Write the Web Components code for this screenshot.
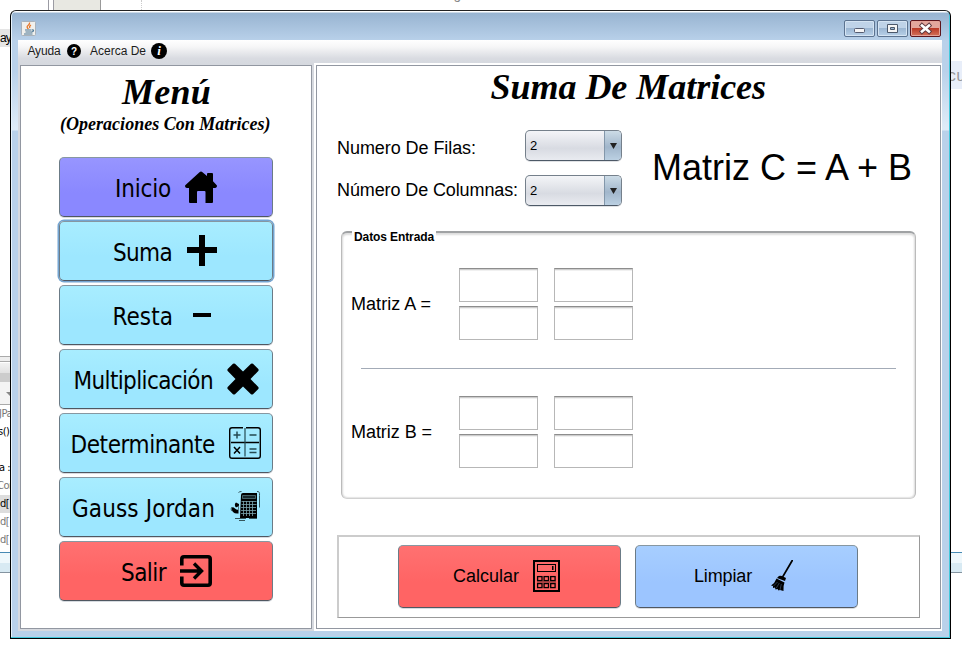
<!DOCTYPE html>
<html lang="es"><head><meta charset="utf-8"><title>Suma De Matrices</title>
<style>html,body{margin:0;width:962px;height:649px;overflow:hidden;background:#fff;font-family:"Liberation Sans",Arial,sans-serif;color:#000}</style></head>
<body><desk-top></desk-top>
<script>
const define=(name,html,setup)=>customElements.define(name,class extends HTMLElement{
  connectedCallback(){
    if(this.shadowRoot)return;
    this.attachShadow({mode:"open"}).innerHTML=typeof html==="function"?html(this):html;
    if(setup)setup(this);
  }
});
const svg=(body,w=32,h=32,vb=`0 0 ${w} ${h}`)=>`<svg width="${w}" height="${h}" viewBox="${vb}">${body}</svg>`;
const keys=(xs,ys,w,h)=>ys.map(y=>xs.map(x=>`<rect x="${x}" y="${y}" width="${w}" height="${h}"/>`).join("")).join("");
const ICONS={
 home:svg('<path d="M14.5 1.2Q16 0 17.5 1.2L22 5V3Q22 2 23 2H27Q28 2 28 3V10.3L31.5 14Q32.5 15 31.5 16.2Q31 17 30 17H28V31Q28 32 27 32H20.5V21Q20.5 20 19.5 20H13Q12 20 12 21V32H5Q4 32 4 31V17H2Q1 17 .4 16.2Q-.4 15 .5 14Z"/>'),
 plus:svg('<path d="M13 0h6v12h12v6H19v13h-6V18H1v-6h12z"/>'),
 minus:svg('<path d="M7 14h18v4H7z"/>'),
 times:svg('<path d="M6 .8Q7 0 8 .8L16 8.500 24 .8Q25 0 26 .8L31.300 6Q32 7 31.300 8L23.500 16l7.800 8Q32 25 31.300 26L26 31.200Q25 32 24 31.200L16 23.500 8 31.200Q7 32 6 31.200L.7 26Q0 25 .7 24L8.500 16 .7 8Q0 7 .7 6Z"/>'),
 grid:svg('<g fill="none" stroke="#000"><path d="M14 .7H3Q.7.7.7 3v26q0 2.300 2.300 2.300h26q2.300 0 2.300-2.300V3Q31.300.7 29 .7H17M2 15.500h28" stroke-width="1.400"/><path d="M16 1v28.500" stroke="#244a52" stroke-width="1.200"/><path d="M4.500 8h7M8 4.500v7M20.500 8h7M20.500 22h7M20.500 25.500h7" stroke="#244a52" stroke-width="1.500"/><path d="M5 20l6 6.500m0-6.500-6 6.500" stroke-width="1.500"/></g>'),
 gauss:svg('<path d="M11 4q0-2 2-2h14v25H10Z"/><path d="M8.500 1.500q1-1 3-1M27 .5q3-.5 2.500 4v12" fill="none" stroke="#36565c"/><path d="M12.500 4.500h13v3h-13z" fill="#17262a" stroke="#6b939b" stroke-width=".6"/><path d="M11.500 10.500h15M11.500 13.500h15M11 16.500h15M11 19.500h15M11 22.500h15M13.500 10v15M16.500 10v15M19.500 10v15M22.500 10v15" stroke="#7aa5af" stroke-width=".8"/><path d="M6 11.500Q4 13 5.500 16q2 1 3-1.500V22.500Q5 23 3 21 1 19 2 16.500q1-1 3 1 2 2 4 1V13z"/><path d="M2 16q-2 2 0 4M5 27.500h11m3 0h8M9 29.500h6" fill="none" stroke="#36565c"/>'),
 exit:svg('<path d="M1.800 10.500V4Q1.800 1.800 4 1.800h24q2.200 0 2.200 2.200v24q0 2.200-2.200 2.200H4q-2.200 0-2.200-2.200v-6.500" fill="none" stroke="#000" stroke-width="3.600"/><path d="M0 16h21M14 8.500l7.500 7.500-7.500 7.500" fill="none" stroke="#000" stroke-width="3.400"/>'),
 calc:svg('<path fill-rule="evenodd" d="M0 0h27v32H0zM2 2v28h23V2z"/><path fill-rule="evenodd" d="M4 4h19v8H4zM5 5v6h17V5z"/><path d="M19 6h1.500v4H19z"/><g fill="none" stroke="#000" stroke-width="1.300">'+keys([4.6,11.1,17.700],[16.600,23.600],4.400,4)+'</g><path d="M4 22h19" stroke="#6b2929"/>',27,32),
 broom:svg('<path d="M20.500 0h1.500v1L12 18h-2zM7 17q1-2 4-1l4 2-1 3-8-3zM5.500 18.500l8 4Q12 26 12.500 31L9 30 7.500 30.500 6.500 29 4.500 29.500 4 27.500 2 28 2 26 0 25.500Q4 23 5.500 18.500Z"/><path d="M6.500 22l-4 4M8.300 23l-3 5M10.300 24l-1.300 6" stroke="#5b7594" stroke-width=".5"/>',23,32)
};

define("desk-top",`<style>:host{display:block;position:relative;width:962px;height:649px;overflow:hidden;background:#fff}
i,span{position:absolute;display:block;font-style:normal;white-space:pre;box-sizing:border-box}
span{font-size:12px;line-height:16px;letter-spacing:-.3px}.c{font:11px/16px "DejaVu Sans Condensed",sans-serif;letter-spacing:-.5px}app-window{position:absolute;left:10px;top:10px}</style>
<i style="left:48px;top:0;width:6px;height:11px;border:solid #9b9ba3;border-width:0 1px"></i><i style="left:54px;top:0;width:47px;height:11px;background:#e8e8e2;border-right:1px solid #999"></i>
<i style="left:141px;top:0;height:10px;border-left:1px dotted #ccc"></i><span style="left:453px;top:-13px;color:#888;font-family:'Liberation Mono',monospace;font-size:14px">g</span>
<i style="left:0;top:29px;width:11px;height:18px;background:#e5e5e5"></i><span style="left:0;top:30px;letter-spacing:-.8px">ay</span>
<i style="left:0;top:356px;width:11px;height:6px;border:solid #aaa;border-width:1px 0;background:#eee"></i><i style="left:0;top:363px;width:11px;height:19px;background:linear-gradient(#f2f2f2,#e2e2e2 50%,#ccc 51%)"></i><i style="left:0;top:382px;width:11px;height:23px;background:#f4f4f4;border-bottom:1px solid #aaa"></i><i style="left:6px;top:392px;border:4px solid transparent;border-top-color:#888;border-bottom:0"></i>
<span class="c" style="left:-1px;top:406px;color:#777">JPa</span><span class="c" style="left:-2px;top:424px">s()</span><span class="c" style="left:-1px;top:460px">a :</span><span class="c" style="left:-3px;top:478px;color:#777">Con</span>
<i style="left:0;top:495px;width:11px;height:18px;background:#ddd"></i><span class="c" style="left:0;top:496px">d[</span><span class="c" style="left:0;top:514px;color:#777">d[</span><span class="c" style="left:0;top:532px;color:#777">d[</span>
<i style="left:0;top:552px;width:11px;height:21px;border:solid #478ab4;border-width:1px 0;border-bottom-color:#8494a0;background:linear-gradient(#eff8fc 50%,#d8eaf3 51%)"></i>
<i style="left:950px;top:552px;width:12px;height:21px;border:solid #478ab4;border-width:1px 0;border-bottom-color:#8494a0;background:linear-gradient(#eff8fc 50%,#d8eaf3 51%)"></i>
<i style="left:950px;top:61px;width:12px;height:28px;background:#e8eef9"></i><span style="left:947px;top:69px;color:#999;font-family:'Liberation Mono',monospace;font-size:16px;letter-spacing:-.5px">cu</span>
<app-window></app-window>`);

define("app-window",`<style>
:host{display:flex;flex-direction:column;box-sizing:border-box;width:941px;height:629px;border:1px solid #000;border-top-color:#222;border-radius:6px 6px 0 0;overflow:hidden;background:linear-gradient(#fff 1px,#98b4d1 2px,#b9d1ea 30px,#b9d1ea 60px,#deebf7 116px,#deebf7 119px,#b9d1ea 120px);box-shadow:inset -1px -1px #43c8db,inset 1px 0 #e7f3fc}
.client{margin:0 8px 0 7px;height:591px;background:linear-gradient(90deg,#d6d9df 296px,#fff 296px);display:flex;flex-direction:column}
.cols{display:flex;gap:4px;padding:2px 1px 2px 2px}
</style><title-bar></title-bar><div class="client"><menu-bar></menu-bar><div class="cols"><side-panel></side-panel><main-panel></main-panel></div></div>`);

define("title-bar",`<style>:host{display:flex;height:29px;padding:0 9px 0 9px;align-items:flex-start;gap:2px}
.j{margin:10px auto 0 1px;width:15px;height:15px}
b{box-sizing:border-box;width:31px;height:17px;margin-top:9px;border:1px solid #5c7390;border-radius:2px;background:linear-gradient(#bfd3e8 48%,#9cb7d3 50%,#b8d0e8);box-shadow:inset 0 0 0 1px #d5e4f3}
b.x{border-color:#5d151c;background:linear-gradient(#e3a79d 48%,#bb3b28 50%,#d4735b);box-shadow:inset 0 0 0 1px #e4a399}svg{display:block}</style>
<svg class="j" viewBox="0 0 15 15"><rect x=".5" y=".5" width="14" height="14" rx="1" fill="#f1f0ed" stroke="#aab2ba"/><path d="M8.500 1.500Q9 3 7 4.500T7.500 8M10 4Q8 5 8.800 7" fill="none" stroke="#e8792b" stroke-width="1.300"/><path d="M4 9h6.500M4.500 11h5.500M3 13h8.500M11 9q2.500-.5 1 1.500l-2 .8" fill="none" stroke="#4d7795" stroke-width="1.200"/></svg>
<b><svg width="29" height="15"><rect x="9.500" y="7.500" width="10" height="4" rx="1" fill="#f5f5f5" stroke="#555b70"/></svg></b>
<b><svg width="29" height="15"><path fill-rule="evenodd" d="M9.500 3.500h10v8h-10zM12.500 6.500v2h4v-2z" fill="#f5f5f5" stroke="#4b586b"/></svg></b>
<b class="x"><svg width="29" height="15"><path d="M11 4.500l7 6m0-6l-7 6" stroke="#633b40" stroke-width="4.500" stroke-linecap="square"/><path d="M11 4.500l7 6m0-6l-7 6" stroke="#fff" stroke-width="2.600" stroke-linecap="square"/></svg></b>`);

define("menu-bar",`<style>:host{display:flex;align-items:center;height:23px;box-sizing:border-box;padding:0 0 1px 9.500px;background:linear-gradient(#fff,#f6f6f7 30%,#d9dbe1 80%,#d6d9df);font-size:12px;color:#1c1c1c}
svg{display:block}.q{margin:0 9.500px 0 6px}.n{margin-left:5px}text{font:bold 10px "Liberation Sans";fill:#fff;text-anchor:middle}.n text{font:italic bold 13px "Liberation Serif"}</style>
<fit-text w="33">Ayuda</fit-text><svg class="q" width="14" height="14"><circle cx="7" cy="7" r="7"/><text x="7" y="10.700">?</text></svg>
<fit-text w="56">Acerca De</fit-text><svg class="n" width="16" height="16"><circle cx="8" cy="8" r="8"/><text x="8" y="12.300">i</text></svg>`);

define("side-panel",`<style>:host{display:flex;flex-direction:column;align-items:flex-start;box-sizing:border-box;width:292px;height:564px;border:1px solid #9297a1;background:#fff;padding:6px 0 0 38px}
.t{font:italic bold 36px/41px "Liberation Serif",serif;margin-left:63px}.s{font:italic bold 18px/20px "Liberation Serif",serif;margin:1px 0 0 1px}
.l{display:flex;flex-direction:column;gap:4px;margin-top:23px}</style>
<fit-text class="t" w="89">Menú</fit-text><fit-text class="s" w="210.500">(Operaciones Con Matrices)</fit-text>
<div class="l"><op-button icon="home" tx="55" w="56" g="14" tone="violet">Inicio</op-button><op-button icon="plus" tx="53" w="59" g="14" focused>Suma</op-button><op-button icon="minus" tx="52.500" w="60.500" g="13">Resta</op-button><op-button icon="times" tx="13.500" w="139.500" g="14">Multiplicación</op-button><op-button icon="grid" tx="10.500" w="144.500" g="14">Determinante</op-button><op-button icon="gauss" tx="12" w="143" g="15">Gauss Jordan</op-button><op-button icon="exit" tx="61" w="45" g="14" tone="red">Salir</op-button></div>`);

define("op-button",h=>`<style>
:host{display:flex;align-items:center;box-sizing:border-box;width:214px;height:60px;padding:0 0 0 ${h.getAttribute("tx")}px;border:1px solid;border-color:#8797a1 #6b7b86 #505761;border-radius:5px;background:linear-gradient(#a8edff,#9de7ff 60%);box-shadow:0 1px #d7dbe0;font:24px/30px "DejaVu Sans Condensed","DejaVu Sans",sans-serif}
:host([tone=violet]){background:linear-gradient(#9795ff,#8a88ff 60%)}:host([tone=red]){background:linear-gradient(#ff7171,#ff6464 60%)}:host([tone=blue]){background:linear-gradient(#a7ceff,#9cc5ff 60%)}
:host([focused]){box-shadow:0 0 0 1.500px #73a4d1}
:host([wide]){width:223px;height:63px;font:18px/21px "Liberation Sans",Arial,sans-serif}
svg{display:block;flex:none;margin-left:${h.getAttribute("g")}px}fit-text{margin-top:3px}:host([wide]) fit-text{margin-top:-1px}:host([wide]) svg{margin-top:-1px}</style><fit-text w="${h.getAttribute("w")}"><slot></slot></fit-text>${ICONS[h.getAttribute("icon")]}`);

define("main-panel",`<style>:host{display:flex;flex-direction:column;align-items:flex-start;box-sizing:border-box;width:625px;height:564px;border:1px solid #9297a1;background:#fff;padding-left:20px}
.t{font:italic bold 36px/41px "Liberation Serif",serif;margin:1px 0 0 153.500px}.top{display:flex;height:76px;margin-top:22px}
.g{display:grid;grid-template-columns:188px 97px;grid-template-rows:31px 31px;row-gap:14px;align-items:center;font-size:18px}
.f{font-size:36px;line-height:40px;margin:18px 0 0 30px}.g fit-text{margin-top:6px}.g .c{margin-top:-1px}
.foot{display:flex;gap:14px;box-sizing:border-box;width:583px;height:83px;margin-top:36px;padding:8px 0 0 59px;border:solid #ccc;border-width:2px 1px 1px 2px;border-right-color:#999;border-bottom-color:#999}</style>
<fit-text class="t" w="275.500">Suma De Matrices</fit-text>
<div class="top"><div class="g"><fit-text w="139">Numero De Filas:</fit-text><combo-box>2</combo-box><fit-text class="c" w="181">Número De Columnas:</fit-text><combo-box>2</combo-box></div><fit-text class="f" w="260">Matriz C = A + B</fit-text></div>
<group-box label="Datos Entrada"><matrix-row w="80">Matriz A =</matrix-row><hr-line></hr-line><matrix-row w="81">Matriz B =</matrix-row></group-box>
<div class="foot"><op-button wide tone="red" icon="calc" tx="54" w="66" g="14">Calcular</op-button><op-button wide tone="blue" icon="broom" tx="58" w="58" g="18.500">Limpiar</op-button></div>`);

define("combo-box",`<style>:host{display:flex;align-items:center;justify-content:space-between;box-sizing:border-box;width:97px;height:31px;padding-left:4px;border:1px solid #75808b;border-bottom-color:#4d5967;border-radius:5px;background:linear-gradient(#f4f5f8,#d8dbe2 60%,#e9ebf0);font-size:13px;overflow:hidden;box-shadow:0 1px #e0e2e5}
i{display:flex;align-items:center;justify-content:center;width:16px;height:31px;border-left:1px solid #8397aa;background:linear-gradient(#cfdee8,#a1b6cb 55%,#bdd2e4)}</style><slot></slot><i><svg width="7" height="6"><path d="M0 0h7L3.500 6z" fill="#222"/></svg></i>`);

define("group-box",h=>`<style>:host{display:flex;flex-direction:column;align-items:flex-start;box-sizing:border-box;width:575px;height:268px;margin:25px 0 0 4px;padding:0 0 0 9px;border:1px solid #bbb;border-top:2px solid #a0a2a4;border-bottom-color:#d1d1d1;border-radius:6px;box-shadow:inset 0 2px 2px #ddd,inset 1px 0 2px #ddd,inset -1px 0 2px #ddd,inset 0 -1px 1px #f0f0f0}
.h{font:bold 12px/13px "Liberation Sans",sans-serif;background:#fff;margin:-3px 0 23px 1px;padding:1px 2px 0;height:14px;position:relative}</style><div class="h"><fit-text w="80">${h.getAttribute("label")}</fit-text></div><slot></slot>`);

define("hr-line",`<style>:host{display:block;width:535px;height:1px;margin:28px 0 27px 10px;background:#a3abb7}</style>`);

define("matrix-row",h=>`<style>:host{display:flex;align-items:center;height:72px;font-size:18px}
.w{width:108px}.m{display:grid;grid-template-columns:79px 79px;grid-auto-rows:34px;gap:4px 16px}
i{box-sizing:border-box;border:1px solid #b7b7b7;border-top-color:#8d8d8d;box-shadow:inset 0 1px #cdcdcd,inset 0 2px #f0f0f0;background:#fff}</style><div class="w"><fit-text w="${h.getAttribute("w")}"><slot></slot></fit-text></div><div class="m"><i></i><i></i><i></i><i></i></div>`);

// Spreads letter spacing so that a label fills the width given in "w".
define("fit-text",`<style>:host{display:inline-block;white-space:pre;width:max-content;flex:none}</style><slot></slot>`,el=>{
  const slot=el.querySelector("slot");
  const text=slot?slot.assignedNodes().map(n=>n.textContent).join(""):el.textContent;
  const n=el.getBoundingClientRect().width;
  if(text.length)el.style.letterSpacing=(+el.getAttribute("w")-n)/text.length+"px";
});
</script></body></html>
